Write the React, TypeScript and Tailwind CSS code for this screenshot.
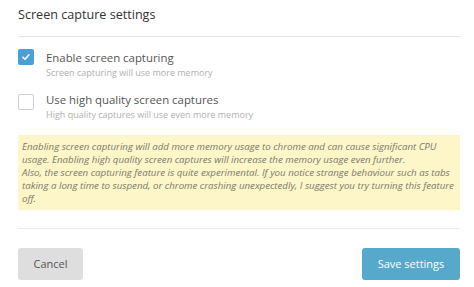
import React, { useState } from 'react';

const font = { fontFamily: '"Open Sans", "Noto Sans", sans-serif' };

function Check({ checked, onChange }: { checked: boolean; onChange: () => void }) {
    return (
        <button
            type="button"
            onClick={onChange}
            className={
                checked
                    ? 'w-4 h-4 shrink-0 rounded-[2px] bg-[#4b9fd5] flex items-center justify-center'
                    : 'w-4 h-4 shrink-0 rounded-[2px] border border-[#cfcfcf] bg-white'
            }
        >
            {checked && (
                <svg width="10" height="10" viewBox="0 0 10 10" fill="none">
                    <path d="M2 5.2l2 2 4-4.4" stroke="white" strokeWidth="1.6" strokeLinecap="round" strokeLinejoin="round" />
                </svg>
            )}
        </button>
    );
}

export default function App() {
    const [enabled, setEnabled] = useState(true);
    const [hq, setHq] = useState(false);

    const options = [
        { label: 'Enable screen capturing', hint: 'Screen capturing will use more memory', value: enabled, toggle: () => setEnabled(!enabled) },
        { label: 'Use high quality screen captures', hint: 'High quality captures will use even more memory', value: hq, toggle: () => setHq(!hq) },
    ];

    return (
        <div className="w-[474px] h-[287px] bg-white pl-[18px] pr-[14px] pt-[6px]" style={font}>
            <h2 className="text-[12.6px] leading-[18px] text-[#333] pb-[12px] border-b border-[#e6e6e6]">
                Screen capture settings
            </h2>
            <div className="pt-[12px] space-y-[12px]">
                {options.map((o) => (
                    <div key={o.label} className="flex gap-[12px]">
                        <div><Check checked={o.value} onChange={o.toggle} /></div>
                        <div>
                            <div className="text-[11.4px] leading-[17px] text-[#555]">{o.label}</div>
                            <div className="text-[9px] leading-[13px] text-[#b0b0b0]">{o.hint}</div>
                        </div>
                    </div>
                ))}
            </div>
            <div className="mt-[14px] bg-[#fdf6c9] px-[4px] py-[5px] text-[9.7px] leading-[13px] italic text-[#7a7a6a]">
                Enabling screen capturing will add more memory usage to chrome and can cause significant CPU usage. Enabling high quality screen captures will increase the memory usage even further.
                <br />
                Also, the screen capturing feature is quite experimental. If you notice strange behaviour such as tabs taking a long time to suspend, or chrome crashing unexpectedly, I suggest you try turning this feature off.
            </div>
            <div className="mt-[18px] border-t border-[#ececec] pt-[19px] flex justify-between">
                <button className="w-[65px] h-[32px] rounded-[3px] bg-[#dedede] text-[11px] text-[#555]">Cancel</button>
                <button className="w-[98px] h-[32px] rounded-[3px] bg-[#56a9ca] text-[11px] text-white">Save settings</button>
            </div>
        </div>
    );
}
